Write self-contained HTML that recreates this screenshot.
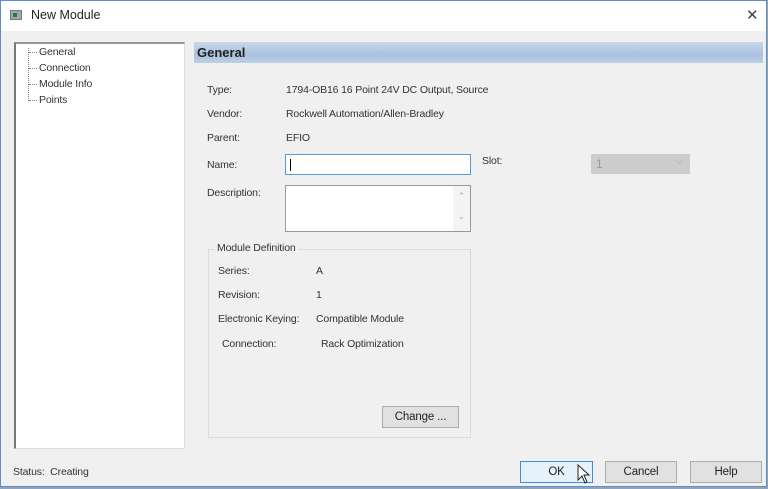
<!DOCTYPE html>
<html><head><meta charset="utf-8"><style>
*{margin:0;padding:0;box-sizing:border-box}
body{width:768px;height:489px;overflow:hidden;background:#8fa4b8;font-family:"Liberation Sans",sans-serif;font-size:10.5px;letter-spacing:-0.15px;color:#333;position:relative}
.win{position:absolute;left:0;top:0;width:767px;height:487px;background:#f0f0f0;border:1px solid #5b8fc7}
.title{position:absolute;left:0;top:0;width:765px;height:30px;background:#fff}
.a{position:absolute;white-space:nowrap}
.tree{position:absolute;left:13px;top:41px;width:171px;height:407px;background:#fff;border-left:2px solid #777;border-top:2px solid #999;border-right:1px solid #ddd;border-bottom:1px solid #ddd}
.tl{position:absolute;left:13px;width:8px;border-top:1px dotted #888}
.hdr{position:absolute;left:193px;top:41px;width:569px;height:21px;background:linear-gradient(#c8d8ea,#a9c1dc 60%,#bcd0e6);font-weight:bold;font-size:13px;letter-spacing:0;color:#222;padding:3px 0 0 3px}
.inp{position:absolute;background:#fff;border:1px solid #aaa}
.btn{position:absolute;background:#e1e1e1;border:1px solid #adadad;text-align:center;font-size:11.5px;color:#222}
</style></head><body>
<div class="win">
<div class="title">
 <div class="a" style="left:9px;top:9px;width:12px;height:10px;background:#9aa;border:1px solid #778"><div style="width:4px;height:4px;background:#2a7a4a;margin:2px"></div></div>
 <div class="a" style="left:30px;top:7px;font-size:12.5px;letter-spacing:0;color:#222">New Module</div>
 <div class="a" style="left:745px;top:5px;font-size:15px;color:#444">✕</div>
</div>
<div class="tree">
 <div style="position:absolute;left:12px;top:4px;height:53px;border-left:1px dotted #888"></div>
 <div class="tl" style="top:8px"></div><div class="tl" style="top:24px"></div><div class="tl" style="top:40px"></div><div class="tl" style="top:56px"></div>
 <div class="a" style="left:23px;top:2px">General</div>
 <div class="a" style="left:23px;top:18px">Connection</div>
 <div class="a" style="left:23px;top:34px">Module Info</div>
 <div class="a" style="left:23px;top:50px">Points</div>
</div>
<div class="hdr">General</div>
<div class="a" style="left:206px;top:83px">Type:</div><div class="a" style="left:285px;top:83px">1794-OB16 16 Point 24V DC Output, Source</div>
<div class="a" style="left:206px;top:107px">Vendor:</div><div class="a" style="left:285px;top:107px">Rockwell Automation/Allen-Bradley</div>
<div class="a" style="left:206px;top:131px">Parent:</div><div class="a" style="left:285px;top:131px">EFIO</div>
<div class="a" style="left:206px;top:158px">Name:</div>
<div class="inp" style="left:284px;top:153px;width:186px;height:21px;border-color:#5b9bd5"><div style="position:absolute;left:4px;top:4px;width:1px;height:12px;background:#000"></div></div>
<div class="a" style="left:481px;top:154px">Slot:</div>
<div class="a" style="left:590px;top:153px;width:99px;height:20px;background:#ccc;color:#999;padding:3px 5px;font-size:12px">1<span style="position:absolute;right:7px;top:2px;font-size:10px;color:#aaa">⌵</span></div>
<div class="a" style="left:206px;top:186px">Description:</div>
<div class="inp" style="left:284px;top:184px;width:186px;height:47px;border-color:#999"><div style="position:absolute;right:0;top:0;width:17px;height:45px;background:#f4f4f4;color:#aaa;font-size:9px;text-align:center;line-height:20px">⌃<br>⌄</div></div>
<div class="a" style="left:207px;top:248px;width:263px;height:189px;border:1px solid #dcdcdc"></div>
<div class="a" style="left:214px;top:241px;background:#f0f0f0;padding:0 2px">Module Definition</div>
<div class="a" style="left:217px;top:264px">Series:</div><div class="a" style="left:315px;top:264px">A</div>
<div class="a" style="left:217px;top:288px">Revision:</div><div class="a" style="left:315px;top:288px">1</div>
<div class="a" style="left:217px;top:312px">Electronic Keying:</div><div class="a" style="left:315px;top:312px">Compatible Module</div>
<div class="a" style="left:221px;top:337px">Connection:</div><div class="a" style="left:320px;top:337px">Rack Optimization</div>
<div class="btn" style="left:381px;top:405px;width:77px;height:22px;padding-top:4px">Change ...</div>
<div class="a" style="left:12px;top:465px">Status:&nbsp; Creating</div>
<div class="btn" style="left:519px;top:460px;width:73px;height:22px;padding-top:4px;border-color:#3c8ee0;background:#e5f1fb">OK</div>
<svg class="a" style="left:576px;top:463px" width="14" height="20" viewBox="0 0 14 20"><path d="M1 1 L1 16 L5 12 L8 19 L10 18 L7 11 L12 11 Z" fill="#fff" stroke="#222" stroke-width="1"/></svg>
<div class="btn" style="left:604px;top:460px;width:72px;height:22px;padding-top:4px">Cancel</div>
<div class="btn" style="left:689px;top:460px;width:72px;height:22px;padding-top:4px">Help</div>
</div>
</body></html>
